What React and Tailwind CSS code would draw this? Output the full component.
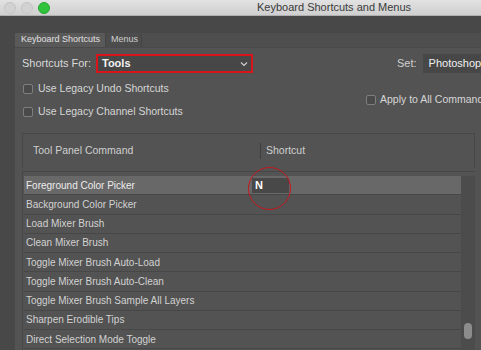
import React from "react";

const rows = [
  "Foreground Color Picker",
  "Background Color Picker",
  "Load Mixer Brush",
  "Clean Mixer Brush",
  "Toggle Mixer Brush Auto-Load",
  "Toggle Mixer Brush Auto-Clean",
  "Toggle Mixer Brush Sample All Layers",
  "Sharpen Erodible Tips",
  "Direct Selection Mode Toggle",
];

function Checkbox() {
  return (
    <span className="w-[10px] h-[10px] rounded-[2px] border border-[#7e7e7e] bg-[#4a4a4a] shrink-0" />
  );
}

export default function App() {
  return (
    <div className="w-[481px] h-[350px] overflow-hidden relative bg-[#484848] font-['Liberation_Sans',sans-serif] text-[10px] text-[#d6d6d6] flex flex-col">
      {/* title bar */}
      <div className="h-[16px] shrink-0 bg-gradient-to-b from-[#e2e2e2] to-[#cfcfcf] border-b border-[#b0b0b0] flex items-center relative">
        <div className="flex items-center gap-[5px] pl-[4px]">
          <span className="w-[12px] h-[12px] rounded-full bg-[#d2d2d2] border border-[#c4c4c4]" />
          <span className="w-[12px] h-[12px] rounded-full bg-[#d2d2d2] border border-[#c4c4c4]" />
          <span className="w-[12px] h-[12px] rounded-full bg-[#2fc43b] border border-[#27a832]" />
        </div>
        <div className="absolute left-[257px] top-0 h-full flex items-center text-[11px] text-[#3a3a3a] whitespace-nowrap">
          Keyboard Shortcuts and Menus
        </div>
      </div>

      <div className="pl-[15px] pt-[17px] flex-1 flex flex-col min-h-0">
        {/* tabs */}
        <div className="flex h-[14px] bg-[#4e4e4e] shrink-0">
          <div className="px-[6px] bg-[#595959] text-[9px] text-[#e0e0e0] flex items-center w-[90px] whitespace-nowrap">Keyboard Shortcuts</div>
          <div className="px-[5px] bg-[#4c4c4c] text-[9px] text-[#cfcfcf] flex items-center border-l border-r border-[#444] w-[37px] whitespace-nowrap">Menus</div>
        </div>

        {/* panel */}
        <div className="flex-1 bg-[#535353] border-t border-[#4a4a4a] pl-[7px] pt-[6px] flex flex-col min-h-0">
          <div className="flex items-center h-[19px]">
            <span className="text-[11px] text-[#d8d8d8] w-[74px] whitespace-nowrap shrink-0">Shortcuts For:</span>
            <div className="w-[157px] h-[19px] shrink-0 border-2 border-[#d9141b] bg-[#474747] flex items-center justify-between pl-[4px] pr-[3px]">
              <span className="text-[#f2f2f2] font-bold text-[11px]">Tools</span>
              <svg width="8" height="6" viewBox="0 0 8 6"><path d="M1 1.5 L4 4.5 L7 1.5" fill="none" stroke="#cfcfcf" strokeWidth="1.2" /></svg>
            </div>
            <span className="ml-[144px] text-[11px] text-[#d0d0d0] shrink-0">Set:</span>
            <div className="ml-[6px] h-[19px] flex-1 bg-[#474747] flex items-center pl-[6px] text-[11px] text-[#f0f0f0] whitespace-nowrap overflow-hidden">Photoshop</div>
          </div>

          <div className="flex mt-[10px]">
            <div className="flex flex-col gap-[12px] w-[344px] shrink-0 text-[10.5px]">
              <label className="flex items-center gap-[5px] h-[11px] pl-[1px] whitespace-nowrap"><Checkbox />Use Legacy Undo Shortcuts</label>
              <label className="flex items-center gap-[5px] h-[11px] pl-[1px] whitespace-nowrap"><Checkbox />Use Legacy Channel Shortcuts</label>
            </div>
            <label className="flex items-center gap-[4px] h-[11px] mt-[11px] whitespace-nowrap text-[10.5px] shrink-0"><Checkbox />Apply to All Commands</label>
          </div>

          {/* table header */}
          <div className="mt-[16px] mr-[6px] h-[35px] border-t border-l border-r border-[#474747] flex items-center shrink-0">
            <div className="w-[237px] pl-[10px] text-[#cfcfcf] text-[10.5px]">Tool Panel Command</div>
            <div className="h-[16px] border-l border-[#3e3e3e]" />
            <div className="pl-[5px] text-[#cfcfcf] text-[10.5px]">Shortcut</div>
          </div>

          {/* list */}
          <div className="mt-[3px] mr-[6px] flex-1 border-l border-t border-[#474747] flex min-h-0 pt-[4px] pl-[1px]">
            <div className="flex-1 flex flex-col">
              {rows.map((r, i) => (
                <div
                  key={r}
                  className={`h-[19.25px] shrink-0 flex items-center border-b border-[#474747] ${i === 0 ? "bg-[#686868] text-[#ececec]" : "text-[#d2d2d2]"}`}
                >
                  <div className="w-[228px] pl-[2px] whitespace-nowrap">{r}</div>
                  {i === 0 && (
                    <div className="w-[37px] h-[15px] bg-[#484848] text-white font-bold text-[11px] flex items-center pl-[3px]">N</div>
                  )}
                </div>
              ))}
            </div>
            <div className="w-[14px] bg-[#4c4c4c] relative shrink-0">
              <div className="absolute left-[3px] top-[147px] w-[8px] h-[16px] rounded-full bg-[#8c8c8c]" />
            </div>
          </div>
        </div>
      </div>

      {/* red circle annotation */}
      <div className="absolute left-[248px] top-[167px] w-[43px] h-[43px] rounded-full border border-[#c8141b]" />
    </div>
  );
}
